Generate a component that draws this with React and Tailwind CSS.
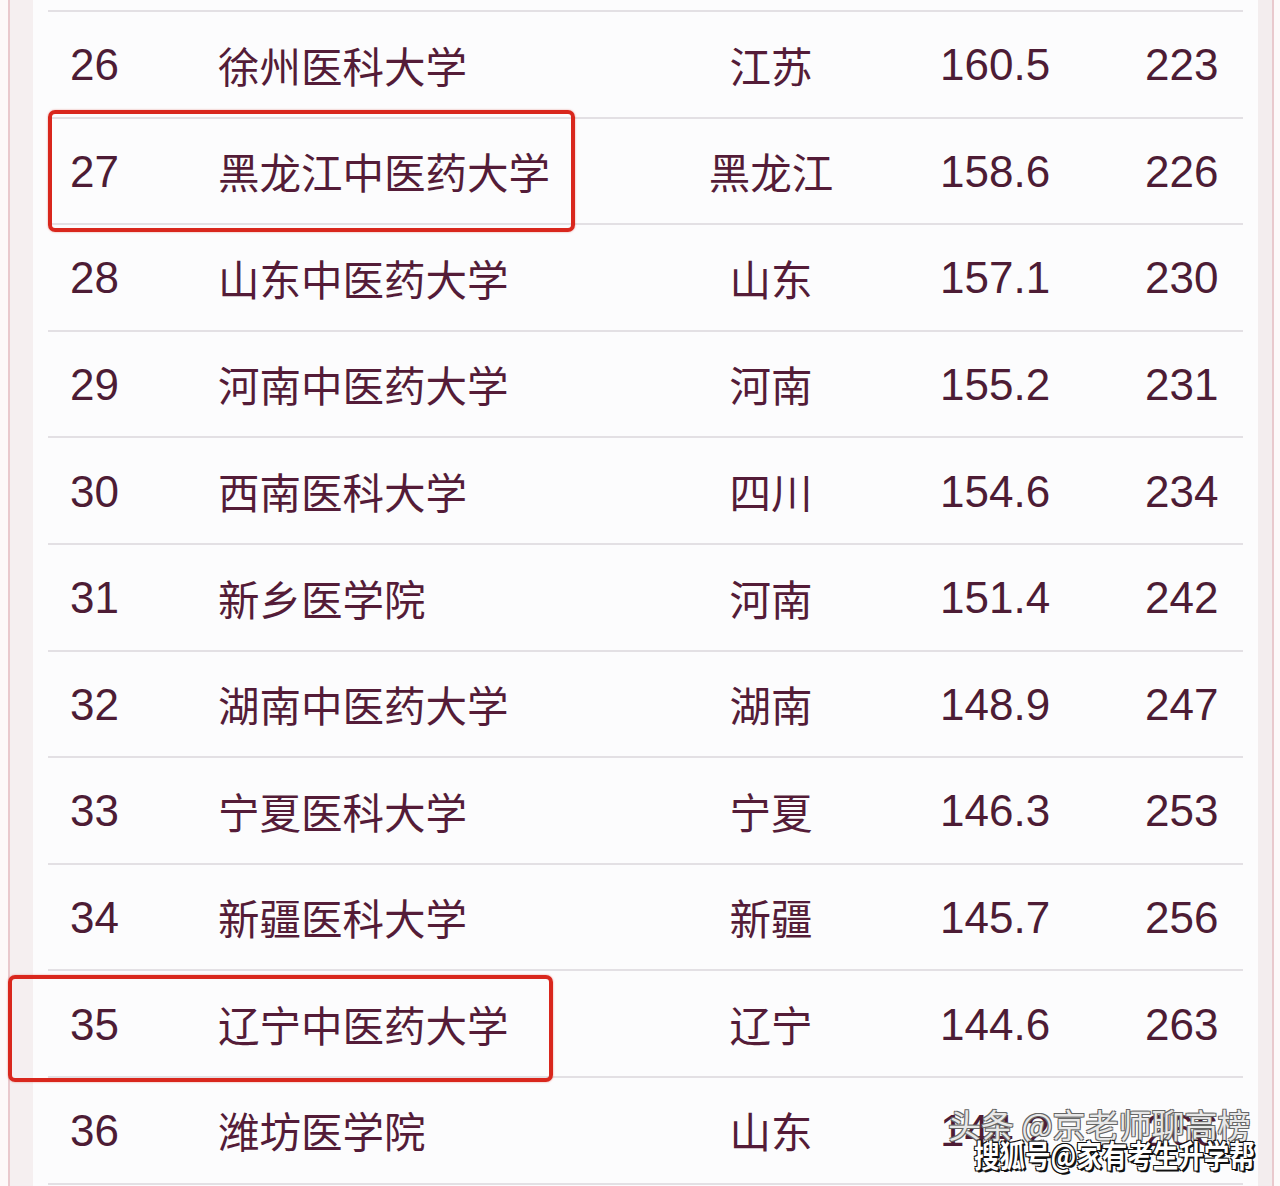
import React from "react";

const rows = [
  ["26", "徐州医科大学", "江苏", "160.5", "223"],
  ["27", "黑龙江中医药大学", "黑龙江", "158.6", "226"],
  ["28", "山东中医药大学", "山东", "157.1", "230"],
  ["29", "河南中医药大学", "河南", "155.2", "231"],
  ["30", "西南医科大学", "四川", "154.6", "234"],
  ["31", "新乡医学院", "河南", "151.4", "242"],
  ["32", "湖南中医药大学", "湖南", "148.9", "247"],
  ["33", "宁夏医科大学", "宁夏", "146.3", "253"],
  ["34", "新疆医科大学", "新疆", "145.7", "256"],
  ["35", "辽宁中医药大学", "辽宁", "144.6", "263"],
  ["36", "潍坊医学院", "山东", "144.2", "266"],
];

const num = "font-['Liberation_Sans',Arial,sans-serif] text-[44px] leading-none text-[#4d1c35]";
const cjk = "font-['Noto_Sans_CJK_SC',sans-serif] text-[41.5px] leading-none text-[#541c38]";

export default function App() {
  return (
    <div className="relative w-[1280px] h-[1186px] overflow-hidden bg-white flex">
      <div className="w-[8px] bg-[#fdf9f9]" />
      <div className="w-[2px] bg-[#e9c9cd]" />
      <div className="w-[23px] bg-[#f5eff0]" />
      <div className="flex-1 bg-[#fcfcfd] pt-[10px]">
        <div className="mx-[15px] border-t-2 border-[#e3e0e4]">
          {rows.map((r) => (
            <div
              key={r[0]}
              className="h-[106.6px] border-b-2 border-[#e3e0e4] grid grid-cols-[170px_442px_222px_205px_1fr] items-center pt-[2px]"
            >
              <div className={`pl-[22px] ${num}`}>{r[0]}</div>
              <div className={cjk}>{r[1]}</div>
              <div className={`text-center ${cjk}`}>{r[2]}</div>
              <div className={`pl-[58px] ${num}`}>{r[3]}</div>
              <div className={`pl-[58px] ${num}`}>{r[4]}</div>
            </div>
          ))}
        </div>
      </div>
      <div className="w-[14px] bg-[#f3edee]" />
      <div className="w-[2px] bg-[#e9c9cd]" />
      <div className="w-[6px] bg-[#fdf9f9]" />

      {/* highlight boxes */}
      <div className="absolute left-[48px] top-[110px] w-[527px] h-[122px] border-[4px] border-[#d9271d] rounded-[7px] shadow-[0_0_2px_rgba(217,39,29,0.5)]" />
      <div className="absolute left-[8px] top-[975px] w-[545px] h-[107px] border-[4px] border-[#d9271d] rounded-[7px] shadow-[0_0_2px_rgba(217,39,29,0.5)]" />

      {/* watermark */}
      <div className="absolute left-[948px] top-[1108px] font-['Noto_Sans_CJK_SC',sans-serif] text-[33px] leading-none text-white/85 whitespace-nowrap [text-shadow:1px_1px_0_#666,-1px_-1px_0_#666,1px_-1px_0_#666,-1px_1px_0_#666]">
        头条 @京老师聊高榜
      </div>
      <div className="absolute left-[974px] top-[1138px] origin-top scale-y-[1.2] font-['Noto_Sans_CJK_SC',sans-serif] font-bold text-[25.5px] leading-none text-white whitespace-nowrap [text-shadow:1px_1px_0_#111,-1px_-1px_0_#111,1px_-1px_0_#111,-1px_1px_0_#111,2px_2px_0_#111]">
        搜狐号@家有考生升学帮
      </div>
    </div>
  );
}
